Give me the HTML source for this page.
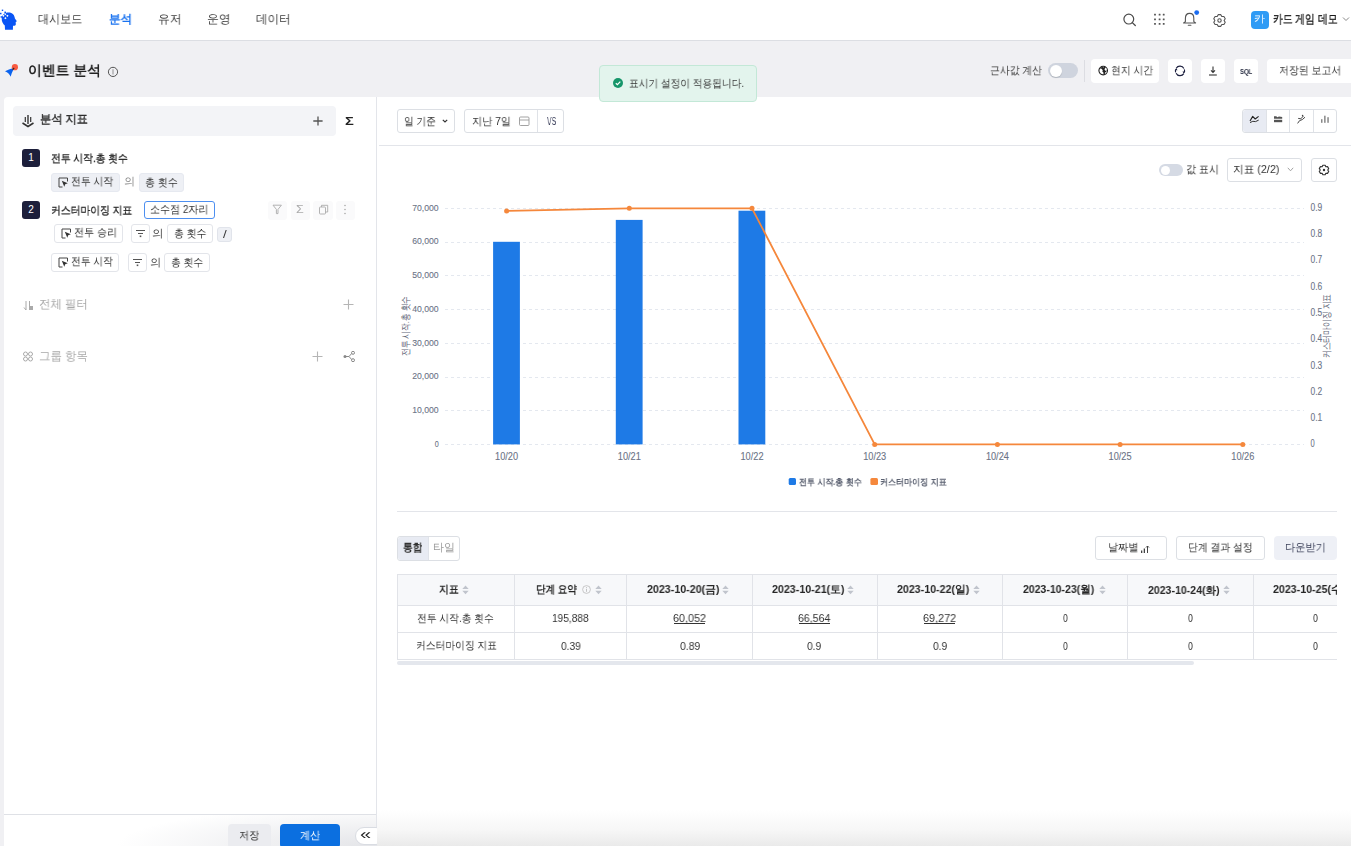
<!DOCTYPE html>
<html><head><meta charset="utf-8"><style>
*{box-sizing:border-box;}
html,body{margin:0;padding:0;}
body{width:1351px;height:846px;overflow:hidden;position:relative;background:#f0f0f3;font-family:"Liberation Sans",sans-serif;color:#333;}
.a{position:absolute;white-space:nowrap;}
.t{position:absolute;white-space:nowrap;line-height:1;transform-origin:0 0;will-change:transform;}
.btnw{position:absolute;background:#fff;border-radius:4px;}
.chip{position:absolute;height:19px;border-radius:3px;}
.chip.f{background:#eef0f5;border:1px solid #e6e9f0;}
.chip.o{background:#fff;border:1px solid #e3e5ea;}
.box{position:absolute;border:1px solid #dcdfe4;border-radius:3px;background:#fff;}
</style></head><body>
<div class="a" style="left:0;top:0;width:1351px;height:41px;background:#fff;border-bottom:1px solid #dcdee3"></div>
<svg class="a" style="left:0;top:5px" width="25" height="30" viewBox="0 0 25 30">
<path d="M5 24.8 L4.8 20.5 C3 19 1.6 16.5 1.7 13.5 C1.8 10 4.5 7.6 8.5 7.6 C12.5 7.6 14.6 10.2 14.9 13.6 L16.9 16.3 L15.7 17 L15.8 19.6 C15.6 20.6 14.8 20.9 13 20.8 L12.9 24.8 Z" fill="#0a55f5"/>
<g fill="#0a55f5"><rect x="1.8" y="4.6" width="1.4" height="1.4"/><rect x="0" y="7.8" width="1.5" height="1.5"/><rect x="4.4" y="6.6" width="1.6" height="1.6"/><rect x="0.6" y="11.2" width="1.5" height="1.5"/></g>
<g fill="#fff"><rect x="2.6" y="10" width="1.6" height="1.6" transform="rotate(45 3.4 10.8)"/><rect x="4.6" y="12.4" width="1.6" height="1.6" transform="rotate(45 5.4 13.2)"/><rect x="6.6" y="10" width="1.6" height="1.6" transform="rotate(45 7.4 10.8)"/><rect x="4.6" y="8.6" width="1.4" height="1.4" transform="rotate(45 5.3 9.3)"/></g>
</svg>
<div class="t" style="left:37.58px;top:13.00px;font-size:12px;font-weight:400;color:#3a3a3a;transform:scaleX(0.9239);">대시보드</div>
<div class="t" style="left:108.64px;top:13.20px;font-size:12px;font-weight:700;color:#1a73f0;transform:scaleX(0.9636);">분석</div>
<div class="t" style="left:157.91px;top:13.20px;font-size:12px;font-weight:400;color:#3a3a3a;transform:scaleX(0.9857);">유저</div>
<div class="t" style="left:206.81px;top:13.20px;font-size:12px;font-weight:400;color:#3a3a3a;transform:scaleX(0.9857);">운영</div>
<div class="t" style="left:255.94px;top:13.20px;font-size:12px;font-weight:400;color:#3a3a3a;transform:scaleX(0.9636);">데이터</div>
<svg class="a" style="left:1122px;top:12px" width="15" height="15" viewBox="0 0 15 15"><circle cx="6.8" cy="7.1" r="4.9" fill="none" stroke="#4a4a4a" stroke-width="1.2"/><path d="M10.3 10.6 L13.3 13.5" stroke="#4a4a4a" stroke-width="1.3" stroke-linecap="round"/></svg>
<svg class="a" style="left:1153px;top:13px" width="13" height="13" viewBox="0 0 13 13"><g fill="#555"><rect x="1.1" y="0.7999999999999999" width="1.8" height="1.8" rx="0.3"/><rect x="5.699999999999999" y="0.7999999999999999" width="1.8" height="1.8" rx="0.3"/><rect x="9.799999999999999" y="0.7999999999999999" width="1.8" height="1.8" rx="0.3"/><rect x="1.1" y="5.5" width="1.8" height="1.8" rx="0.3"/><rect x="5.699999999999999" y="5.5" width="1.8" height="1.8" rx="0.3"/><rect x="9.799999999999999" y="5.5" width="1.8" height="1.8" rx="0.3"/><rect x="1.1" y="9.9" width="1.8" height="1.8" rx="0.3"/><rect x="5.699999999999999" y="9.9" width="1.8" height="1.8" rx="0.3"/><rect x="9.799999999999999" y="9.9" width="1.8" height="1.8" rx="0.3"/></g></svg>
<svg class="a" style="left:1182px;top:10px" width="18" height="17" viewBox="0 0 18 17"><path d="M1.6 13 L3.4 11.6 L3.4 8.2 C3.4 5.2 5.3 3.4 7.6 3.4 C9.9 3.4 11.8 5.2 11.8 8.2 L11.8 11.6 L13.6 13 Z" fill="none" stroke="#555" stroke-width="1.1" stroke-linejoin="round"/><path d="M6.3 15.3 L8.9 15.3" stroke="#555" stroke-width="1.1" stroke-linecap="round"/><circle cx="14.7" cy="2.6" r="2.4" fill="#1a6cf0"/></svg>
<svg class="a" style="left:1212px;top:13px" width="15" height="15" viewBox="0 0 15 15"><path d="M5.20 3.52 L6.19 1.64 L8.81 1.64 L9.80 3.52 L11.92 3.44 L13.23 5.71 L12.10 7.50 L13.23 9.29 L11.92 11.56 L9.80 11.48 L8.81 13.36 L6.19 13.36 L5.20 11.48 L3.08 11.56 L1.77 9.29 L2.90 7.50 L1.77 5.71 L3.08 3.44 Z" fill="none" stroke="#555" stroke-width="1.1" stroke-linejoin="round"/><circle cx="7.5" cy="7.5" r="1.7" fill="none" stroke="#555" stroke-width="1.1"/></svg>
<div class="a" style="left:1251px;top:11px;width:18px;height:18px;background:#2f9bf5;border-radius:4px"></div>
<div class="t" style="left:1253.89px;top:14.00px;font-size:10px;font-weight:400;color:#fff;transform:scaleX(1.1111);">카</div>
<div class="t" style="left:1272.58px;top:12.50px;font-size:12px;font-weight:400;color:#1a1a1a;transform:scaleX(0.8182);-webkit-text-stroke:0.35px #1a1a1a;">카드 게임 데모</div>
<svg class="a" style="left:1342px;top:16px" width="8" height="6" viewBox="0 0 8 6"><path d="M1 1.5 L4 4.5 L7 1.5" fill="none" stroke="#888" stroke-width="1"/></svg>
<svg class="a" style="left:0;top:58px" width="20" height="22" viewBox="0 58 20 22"><path d="M5 71.3 Q9 69.3 12.8 68.3 L13.6 69.3 Q11.6 73 10.6 76.7 Q9.3 73 5 71.3 Z" fill="#0b63ee"/><circle cx="14.9" cy="67.2" r="3.1" fill="#f85a40"/><path d="M12.6 69.6 L14.2 68" stroke="#1a2333" stroke-width="1.1"/></svg>
<div class="t" style="left:28.01px;top:63.00px;font-size:14px;font-weight:700;color:#222;transform:scaleX(0.9859);">이벤트 분석</div>
<svg class="a" style="left:107px;top:66px" width="12" height="12" viewBox="0 0 12 12"><circle cx="6" cy="5.9" r="4.6" fill="none" stroke="#555" stroke-width="1"/><path d="M6 3.3 L6 8.5" stroke="#999" stroke-width="1.1"/></svg>
<div class="t" style="left:990.10px;top:64.50px;font-size:11px;font-weight:400;color:#3c3c3c;transform:scaleX(0.8964);">근사값 계산</div>
<div class="a" style="left:1048px;top:63px;width:30px;height:15px;border-radius:8px;background:#cfd4de"><div class="a" style="left:1.5px;top:1.5px;width:12px;height:12px;border-radius:6px;background:#fff;box-shadow:0 1px 1px rgba(0,0,0,.15)"></div></div>
<div class="a" style="left:1084px;top:60px;width:1px;height:22px;background:#dcdde2"></div>
<div class="btnw" style="left:1091px;top:59px;width:68px;height:24px"></div>
<svg class="a" style="left:1098px;top:65px" width="11" height="11" viewBox="0 0 11 11"><circle cx="5.2" cy="5.6" r="4.3" fill="none" stroke="#222" stroke-width="1.1"/><path d="M2 3.6 L3.6 3.8 L4.8 5.2 L4.3 6.4 L5.4 7.4 L5.5 9.6 L6.8 9.2 L7.1 7.5 L8.2 6.8 L9 5.6 L7.3 5.7 L6.5 4.6 L7 3.3 L7.9 2.6 L6.4 1.6 L5.5 2.5 L4 1.8 Z" fill="#222"/></svg>
<div class="t" style="left:1110.60px;top:64.50px;font-size:11px;font-weight:400;color:#3c3c3c;transform:scaleX(0.8978);">현지 시간</div>
<div class="btnw" style="left:1168px;top:59px;width:24px;height:24px"></div>
<svg class="a" style="left:1174px;top:64px" width="12" height="13" viewBox="1174 64 12 13"><path d="M1176.2 68.2 A4.4 4.4 0 0 1 1183.9 68.6 M1183.8 73.6 A4.4 4.4 0 0 1 1176.1 73.2" fill="none" stroke="#1c1f3e" stroke-width="1.15"/><path d="M1175 70.2 L1177.5 70.2 L1176.2 68 Z M1185 71.6 L1182.5 71.6 L1183.8 73.8 Z" fill="#1c1f3e"/><path d="M1175.6 69.5 A4.4 4.4 0 0 0 1175.7 72.4 M1184.4 72.3 A4.4 4.4 0 0 0 1184.3 69.4" fill="none" stroke="#1c1f3e" stroke-width="1.15"/></svg>
<div class="btnw" style="left:1201px;top:59px;width:24px;height:24px"></div>
<svg class="a" style="left:1207px;top:64px" width="12" height="13" viewBox="0 0 12 13"><path d="M6 2.6 L6 8.2 M4 6.4 L6 8.4 L8 6.4" fill="none" stroke="#333" stroke-width="1.1"/><path d="M2 11 L9.8 11" stroke="#444" stroke-width="1.2"/></svg>
<div class="btnw" style="left:1234px;top:59px;width:24px;height:24px"></div>
<div class="t" style="left:1240.00px;top:67.70px;font-size:7px;font-weight:700;color:#262b40;transform:scaleX(0.8571);">SQL</div>
<div class="btnw" style="left:1267px;top:59px;width:90px;height:24px"></div>
<div class="t" style="left:1279.10px;top:65.00px;font-size:11px;font-weight:400;color:#3c3c3c;transform:scaleX(0.9030);">저장된 보고서</div>
<div class="a" style="left:4px;top:97px;width:373px;height:749px;background:#fff;border-right:1px solid #e3e5ea;border-top-left-radius:4px"></div>
<div class="a" style="left:13px;top:106px;width:323px;height:30px;background:#f3f4f7;border-radius:4px"></div>
<svg class="a" style="left:21px;top:114px" width="14" height="14" viewBox="0 0 14 14"><path d="M7 1 L7 10" stroke="#333" stroke-width="1.4"/><path d="M4.3 3 L4.3 8 M9.7 3 L9.7 8" stroke="#333" stroke-width="1.2"/><path d="M1.5 9 L7 12.5 L12.5 9" fill="none" stroke="#333" stroke-width="1.5"/></svg>
<div class="t" style="left:39.56px;top:113.00px;font-size:12px;font-weight:400;color:#1f1f1f;transform:scaleX(0.9388);-webkit-text-stroke:0.35px #1f1f1f;">분석 지표</div>
<svg class="a" style="left:312px;top:115px" width="12" height="12" viewBox="0 0 12 12"><path d="M6 1.4 L6 10.5 M1.3 6 L10.6 6" stroke="#555" stroke-width="1.3"/></svg>
<div class="t" style="left:345.00px;top:116.00px;font-size:11px;font-weight:700;color:#222;transform:scaleX(1.3333);">&#931;</div>
<div class="a" style="left:22px;top:149px;width:18px;height:18px;background:#1d1f3b;border-radius:3px"></div>
<div class="a" style="left:22px;top:149px;width:18px;height:18px;line-height:18px;text-align:center;font-size:10px;font-weight:normal;color:#fff">1</div>
<div class="t" style="left:51.31px;top:152.90px;font-size:11px;font-weight:400;color:#1f1f1f;transform:scaleX(0.8929);-webkit-text-stroke:0.3px #1f1f1f;">전투 시작.총 횟수</div>
<div class="chip f" style="left:51px;top:173px;width:69px"></div>
<svg class="a" style="left:58px;top:177px" width="11" height="11" viewBox="0 0 11 11"><path d="M9.5 4.5 L9.5 1 L1 1 L1 10 L4.5 10" fill="none" stroke="#444" stroke-width="1"/><path d="M3.8 3.8 L9.8 6.3 L7.2 7.2 L6.3 9.8 Z" fill="#333"/></svg>
<div class="t" style="left:71.00px;top:175.80px;font-size:11px;font-weight:400;color:#333;transform:scaleX(0.8978);">전투 시작</div>
<div class="t" style="left:124.19px;top:176.40px;font-size:11px;font-weight:400;color:#888;transform:scaleX(1.0125);">의</div>
<div class="chip f" style="left:139px;top:173px;width:45px"></div>
<div class="t" style="left:145.09px;top:177.00px;font-size:11px;font-weight:400;color:#333;transform:scaleX(0.9118);">총 횟수</div>
<div class="a" style="left:22px;top:201px;width:18px;height:18px;background:#1d1f3b;border-radius:3px"></div>
<div class="a" style="left:22px;top:201px;width:18px;height:18px;line-height:18px;text-align:center;font-size:10px;font-weight:normal;color:#fff">2</div>
<div class="t" style="left:51.21px;top:204.90px;font-size:11px;font-weight:400;color:#1f1f1f;transform:scaleX(0.8921);-webkit-text-stroke:0.3px #1f1f1f;">커스터마이징 지표</div>
<div class="a" style="left:144px;top:201px;width:71px;height:18px;border:1px solid #4d8ff0;border-radius:3px;background:#fff"></div>
<div class="t" style="left:150.29px;top:204.30px;font-size:11px;font-weight:400;color:#333;transform:scaleX(0.9131);">소수점 2자리</div>
<div class="a" style="left:268px;top:201px;width:19px;height:19px;background:#fafafb;border-radius:3px"></div>
<div class="a" style="left:291px;top:201px;width:19px;height:19px;background:#fafafb;border-radius:3px"></div>
<div class="a" style="left:313px;top:201px;width:20px;height:19px;background:#fafafb;border-radius:3px"></div>
<div class="a" style="left:336px;top:201px;width:19px;height:19px;background:#fafafb;border-radius:3px"></div>
<svg class="a" style="left:272px;top:203.5px" width="11" height="11" viewBox="0 0 11 11"><path d="M1 1.2 L9.4 1.2 L6 5.4 L6 9.6 L4.4 9.6 L4.4 5.4 Z" fill="none" stroke="#aaa" stroke-width="0.9"/></svg>
<div class="t" style="left:296.30px;top:205.00px;font-size:10px;font-weight:400;color:#aaa;transform:scaleX(1.2500);">&#931;</div>
<svg class="a" style="left:317.5px;top:203.5px" width="11" height="11" viewBox="0 0 11 11"><rect x="1.5" y="3" width="6" height="7" rx="0.8" fill="none" stroke="#aaa" stroke-width="0.9"/><path d="M3.5 3 L3.5 1.3 L9.7 1.3 L9.7 8 L7.5 8" fill="none" stroke="#aaa" stroke-width="0.9"/></svg>
<svg class="a" style="left:343px;top:203.5px" width="4" height="11" viewBox="0 0 4 11"><circle cx="2" cy="1.5" r="0.8" fill="#aaa"/><circle cx="2" cy="5.5" r="0.8" fill="#aaa"/><circle cx="2" cy="9.5" r="0.8" fill="#aaa"/></svg>
<div class="chip o" style="left:54px;top:224px;width:69px"></div>
<svg class="a" style="left:61px;top:228px" width="11" height="11" viewBox="0 0 11 11"><path d="M9.5 4.5 L9.5 1 L1 1 L1 10 L4.5 10" fill="none" stroke="#444" stroke-width="1"/><path d="M3.8 3.8 L9.8 6.3 L7.2 7.2 L6.3 9.8 Z" fill="#333"/></svg>
<div class="t" style="left:74.08px;top:227.30px;font-size:11px;font-weight:400;color:#333;transform:scaleX(0.9182);">전투 승리</div>
<div class="chip o" style="left:131px;top:224px;width:19px"></div>
<svg class="a" style="left:135px;top:229px" width="11" height="9" viewBox="0 0 11 9"><path d="M1 1.5 L10 1.5 M3 4.5 L8 4.5" stroke="#555" stroke-width="1"/><rect x="4.7" y="6.5" width="1.6" height="1.6" fill="#555"/></svg>
<div class="t" style="left:152.45px;top:227.50px;font-size:11px;font-weight:400;color:#444;transform:scaleX(1.0500);">의</div>
<div class="chip o" style="left:167px;top:224px;width:46px"></div>
<div class="t" style="left:173.70px;top:227.70px;font-size:11px;font-weight:400;color:#333;transform:scaleX(0.9000);">총 횟수</div>
<div class="a" style="left:217px;top:227px;width:15px;height:15px;background:#eef0f5;border:1px solid #e1e4eb;border-radius:3px"></div>
<div class="t" style="left:222.50px;top:230.00px;font-size:10px;font-weight:400;color:#333;transform:scaleX(1.3333);">/</div>
<div class="chip o" style="left:51px;top:253px;width:68px"></div>
<svg class="a" style="left:58px;top:257px" width="11" height="11" viewBox="0 0 11 11"><path d="M9.5 4.5 L9.5 1 L1 1 L1 10 L4.5 10" fill="none" stroke="#444" stroke-width="1"/><path d="M3.8 3.8 L9.8 6.3 L7.2 7.2 L6.3 9.8 Z" fill="#333"/></svg>
<div class="t" style="left:71.31px;top:256.40px;font-size:11px;font-weight:400;color:#333;transform:scaleX(0.8911);">전투 시작</div>
<div class="chip o" style="left:128px;top:253px;width:19px"></div>
<svg class="a" style="left:132px;top:258px" width="11" height="9" viewBox="0 0 11 9"><path d="M1 1.5 L10 1.5 M3 4.5 L8 4.5" stroke="#555" stroke-width="1"/><rect x="4.7" y="6.5" width="1.6" height="1.6" fill="#555"/></svg>
<div class="t" style="left:149.57px;top:256.60px;font-size:11px;font-weight:400;color:#444;transform:scaleX(1.0250);">의</div>
<div class="chip o" style="left:164px;top:253px;width:46px"></div>
<div class="t" style="left:170.91px;top:257.40px;font-size:11px;font-weight:400;color:#333;transform:scaleX(0.8941);">총 횟수</div>
<svg class="a" style="left:23px;top:300px" width="11" height="11" viewBox="0 0 11 11"><path d="M3 1 L3 10 M1 7.5 L3 10" fill="none" stroke="#aaa" stroke-width="1"/><path d="M6.5 1 L6.5 10" stroke="#aaa" stroke-width="1"/><rect x="6.5" y="6" width="3.5" height="4" fill="#aaa"/></svg>
<div class="t" style="left:39.04px;top:298.00px;font-size:12px;font-weight:400;color:#a8a8a8;transform:scaleX(0.9583);">전체 필터</div>
<svg class="a" style="left:343px;top:299px" width="11" height="11" viewBox="0 0 11 11"><path d="M5.5 0.5 L5.5 10.5 M0.5 5.5 L10.5 5.5" stroke="#b5b5b5" stroke-width="1.1"/></svg>
<svg class="a" style="left:22px;top:351px" width="12" height="11" viewBox="0 0 12 11"><circle cx="3.5" cy="3" r="2" fill="none" stroke="#aaa" stroke-width="1"/><circle cx="8.5" cy="3" r="2" fill="none" stroke="#aaa" stroke-width="1"/><circle cx="3.5" cy="8" r="2" fill="none" stroke="#aaa" stroke-width="1"/><circle cx="8.5" cy="8" r="2" fill="none" stroke="#aaa" stroke-width="1"/></svg>
<div class="t" style="left:39.04px;top:350.00px;font-size:12px;font-weight:400;color:#a8a8a8;transform:scaleX(0.9592);">그룹 항목</div>
<svg class="a" style="left:312px;top:351px" width="11" height="11" viewBox="0 0 11 11"><path d="M5.5 0.5 L5.5 10.5 M0.5 5.5 L10.5 5.5" stroke="#b5b5b5" stroke-width="1.1"/></svg>
<svg class="a" style="left:343px;top:351px" width="12" height="11" viewBox="0 0 12 11"><circle cx="2" cy="5.5" r="1.5" fill="#888"/><circle cx="10" cy="1.8" r="1.5" fill="none" stroke="#888" stroke-width="1"/><circle cx="10" cy="9.2" r="1.5" fill="none" stroke="#888" stroke-width="1"/><path d="M2 5.5 L6 5.5 L8.7 2.5 M6 5.5 L8.7 8.5" fill="none" stroke="#888" stroke-width="1"/></svg>
<div class="a" style="left:4px;top:814px;width:372px;height:1px;background:#dfe1e6"></div>
<div class="a" style="left:4px;top:815px;width:372px;height:31px;background:radial-gradient(ellipse 260px 40px at 100% 100%, rgba(225,226,230,0.9) 0%, rgba(255,255,255,0) 100%)"></div>
<div class="a" style="left:228px;top:824px;width:43px;height:24px;background:#ebecf0;border-radius:4px"></div>
<div class="t" style="left:238.57px;top:830.00px;font-size:11px;font-weight:400;color:#333;transform:scaleX(0.9250);">저장</div>
<div class="a" style="left:280px;top:824px;width:60px;height:24px;background:#0b6fe0;border-radius:4px"></div>
<div class="t" style="left:299.57px;top:830.00px;font-size:11px;font-weight:400;color:#fff;transform:scaleX(0.9250);">계산</div>
<div class="a" style="left:355px;top:827px;width:30px;height:18px;background:#fff;border:1px solid #d9dce2;border-radius:9px"></div>
<div class="t" style="left:360.08px;top:827.00px;font-size:14px;font-weight:400;color:#222;transform:scaleX(1.4167);">&#171;</div>
<div class="a" style="left:377px;top:97px;width:974px;height:749px;background:#fff"></div>
<div class="a" style="left:377px;top:810px;width:974px;height:36px;background:linear-gradient(180deg,rgba(234,234,234,0) 0%,rgba(234,234,234,0.4) 55%,rgba(234,234,234,1) 100%)"></div>
<div class="box" style="left:397px;top:109px;width:58px;height:24px"></div>
<div class="t" style="left:403.81px;top:115.70px;font-size:11px;font-weight:400;color:#333;transform:scaleX(0.8882);">일 기준</div>
<svg class="a" style="left:442px;top:119px" width="6" height="4" viewBox="0 0 6 4"><path d="M0.8 0.8 L3 3 L5.2 0.8" fill="none" stroke="#333" stroke-width="1.2"/></svg>
<div class="box" style="left:464px;top:109px;width:100px;height:24px"></div>
<div class="a" style="left:537px;top:110px;width:1px;height:22px;background:#dfe2e7"></div>
<div class="t" style="left:471.57px;top:115.70px;font-size:11px;font-weight:400;color:#333;transform:scaleX(0.9282);">지난 7일</div>
<svg class="a" style="left:519px;top:116px" width="11" height="10" viewBox="0 0 11 10"><rect x="0.5" y="1" width="9.5" height="8.5" rx="1" fill="none" stroke="#999" stroke-width="0.9"/><path d="M0.5 4 L10 4" stroke="#999" stroke-width="0.9"/></svg>
<div class="t" style="left:546.60px;top:117.30px;font-size:10px;font-weight:400;color:#2a2f4d;transform:scaleX(0.6923);">VS</div>
<div class="box" style="left:1242px;top:109px;width:95px;height:24px"></div>
<div class="a" style="left:1243px;top:110px;width:24px;height:22px;background:#e8ebf3;border-radius:3px 0 0 3px"></div>
<div class="a" style="left:1266px;top:110px;width:1px;height:22px;background:#dfe2e7"></div>
<div class="a" style="left:1289px;top:110px;width:1px;height:22px;background:#dfe2e7"></div>
<div class="a" style="left:1313px;top:110px;width:1px;height:22px;background:#dfe2e7"></div>
<svg class="a" style="left:1249px;top:115px" width="11" height="9" viewBox="1249 115 11 9"><path d="M1250 121 L1252.7 116.4 L1255.2 119 L1258.6 116.4" fill="none" stroke="#222" stroke-width="1.1" stroke-linejoin="round"/><path d="M1250 122.6 L1252.8 121.3 L1255.5 121.6 L1258.7 120.1" fill="none" stroke="#333" stroke-width="1" stroke-linejoin="round"/></svg>
<svg class="a" style="left:1273px;top:115px" width="11" height="9" viewBox="1273 115 11 9"><path d="M1274 116.3 L1276.3 116.3 L1277.3 117.2 L1279 116.6 L1282.2 117 L1282.2 118.8 L1274 118.8 Z" fill="#555"/><path d="M1274 119.8 L1282.2 119.8 L1282.2 122.2 L1274 122.2 Z" fill="#555"/></svg>
<svg class="a" style="left:1296px;top:114px" width="11" height="11" viewBox="1296 114 11 11"><path d="M1297.6 123.4 L1299.6 120.6 L1302.3 119.6 L1305 117.2" fill="none" stroke="#444" stroke-width="1" stroke-linejoin="round"/><path d="M1298.2 118.4 L1300.8 118.8 L1303.4 116" fill="none" stroke="#444" stroke-width="1"/><circle cx="1302.6" cy="115.6" r="0.8" fill="#444"/></svg>
<svg class="a" style="left:1320px;top:115px" width="10" height="9" viewBox="1320 115 10 9"><rect x="1321" y="119.2" width="1.5" height="3.6" fill="#888"/><rect x="1324.1" y="115.7" width="1.5" height="7.1" fill="#888"/><rect x="1327.3" y="117.2" width="1.5" height="5.6" fill="#888"/></svg>
<div class="a" style="left:379px;top:145px;width:972px;height:1px;background:#e3e5ea"></div>
<div class="a" style="left:1159px;top:164px;width:24px;height:12px;border-radius:6px;background:#d5dae4"><div class="a" style="left:1.5px;top:1.5px;width:9px;height:9px;border-radius:5px;background:#fff"></div></div>
<div class="t" style="left:1186.08px;top:163.80px;font-size:11px;font-weight:400;color:#333;transform:scaleX(0.9182);">값 표시</div>
<div class="box" style="left:1227px;top:158px;width:75px;height:24px"></div>
<div class="t" style="left:1233.43px;top:164.20px;font-size:11px;font-weight:400;color:#333;transform:scaleX(0.9717);">지표 (2/2)</div>
<svg class="a" style="left:1287px;top:167px" width="7" height="5" viewBox="0 0 7 5"><path d="M0.8 0.8 L3.5 3.8 L6.2 0.8" fill="none" stroke="#999" stroke-width="0.9"/></svg>
<div class="box" style="left:1311px;top:158px;width:26px;height:24px"></div>
<svg class="a" style="left:1318px;top:164px" width="12" height="12" viewBox="0 0 12 12"><path d="M4.15 2.80 L4.84 1.24 L7.16 1.24 L7.85 2.80 L9.54 2.61 L10.70 4.63 L9.70 6.00 L10.70 7.37 L9.54 9.39 L7.85 9.20 L7.16 10.76 L4.84 10.76 L4.15 9.20 L2.46 9.39 L1.30 7.37 L2.30 6.00 L1.30 4.63 L2.46 2.61 Z" fill="none" stroke="#333" stroke-width="1.1" stroke-linejoin="round"/><circle cx="6" cy="6" r="1.2" fill="#333"/></svg>
<svg class="a" style="left:377px;top:190px" width="974" height="310" viewBox="377 190 974 310">
<g stroke="#e4e8ef" stroke-width="1" stroke-dasharray="3 3"><line x1="445" y1="208.5" x2="1304" y2="208.5"/><line x1="445" y1="242.5" x2="1304" y2="242.5"/><line x1="445" y1="275.5" x2="1304" y2="275.5"/><line x1="445" y1="309.5" x2="1304" y2="309.5"/><line x1="445" y1="343.5" x2="1304" y2="343.5"/><line x1="445" y1="377.5" x2="1304" y2="377.5"/><line x1="445" y1="410.5" x2="1304" y2="410.5"/><line x1="445" y1="444.5" x2="1304" y2="444.5"/></g>
<g fill="#1e7ae6"><rect x="493.1" y="241.8" width="26.8" height="202.6"/><rect x="615.8" y="219.9" width="26.8" height="224.5"/><rect x="738.5" y="210.7" width="26.8" height="233.7"/></g>
<g font-family="Liberation Sans, sans-serif" font-size="10" fill="#6b7386" stroke="#6b7386" stroke-width="0.1"><text x="412.2" y="210.6" font-size="9.3" textLength="26.5" lengthAdjust="spacingAndGlyphs">70,000</text><text x="412.2" y="244.3" font-size="9.3" textLength="26.5" lengthAdjust="spacingAndGlyphs">60,000</text><text x="412.2" y="278.1" font-size="9.3" textLength="26.5" lengthAdjust="spacingAndGlyphs">50,000</text><text x="412.2" y="311.8" font-size="9.3" textLength="26.5" lengthAdjust="spacingAndGlyphs">40,000</text><text x="412.2" y="345.6" font-size="9.3" textLength="26.5" lengthAdjust="spacingAndGlyphs">30,000</text><text x="412.2" y="379.3" font-size="9.3" textLength="26.5" lengthAdjust="spacingAndGlyphs">20,000</text><text x="412.2" y="413.0" font-size="9.3" textLength="26.5" lengthAdjust="spacingAndGlyphs">10,000</text><text x="434.7" y="446.7" font-size="9.3" textLength="4" lengthAdjust="spacingAndGlyphs">0</text><text x="1310.5" y="210.7" textLength="11.7" lengthAdjust="spacingAndGlyphs">0.9</text><text x="1310.5" y="237.0" textLength="11.7" lengthAdjust="spacingAndGlyphs">0.8</text><text x="1310.5" y="263.3" textLength="11.7" lengthAdjust="spacingAndGlyphs">0.7</text><text x="1310.5" y="289.6" textLength="11.7" lengthAdjust="spacingAndGlyphs">0.6</text><text x="1310.5" y="315.9" textLength="11.7" lengthAdjust="spacingAndGlyphs">0.5</text><text x="1310.5" y="342.2" textLength="11.7" lengthAdjust="spacingAndGlyphs">0.4</text><text x="1310.5" y="368.5" textLength="11.7" lengthAdjust="spacingAndGlyphs">0.3</text><text x="1310.5" y="394.8" textLength="11.7" lengthAdjust="spacingAndGlyphs">0.2</text><text x="1310.5" y="421.1" textLength="11.7" lengthAdjust="spacingAndGlyphs">0.1</text><text x="1310.5" y="447.4" textLength="4.2" lengthAdjust="spacingAndGlyphs">0</text><text x="495.1" y="460.3" textLength="23" lengthAdjust="spacingAndGlyphs">10/20</text><text x="617.8" y="460.3" textLength="23" lengthAdjust="spacingAndGlyphs">10/21</text><text x="740.5" y="460.3" textLength="23" lengthAdjust="spacingAndGlyphs">10/22</text><text x="863.2" y="460.3" textLength="23" lengthAdjust="spacingAndGlyphs">10/23</text><text x="985.9" y="460.3" textLength="23" lengthAdjust="spacingAndGlyphs">10/24</text><text x="1108.6" y="460.3" textLength="23" lengthAdjust="spacingAndGlyphs">10/25</text><text x="1231.3" y="460.3" textLength="23" lengthAdjust="spacingAndGlyphs">10/26</text></g>
<polyline points="506.6,210.9 629.3,208.3 752.0,208.3 874.7,444.4 997.4,444.4 1120.1,444.4 1242.8,444.4" fill="none" stroke="#f5873b" stroke-width="1.8" stroke-linejoin="round"/>
<g fill="#f5883c"><circle cx="506.6" cy="210.9" r="2.5"/><circle cx="629.3" cy="208.3" r="2.5"/><circle cx="752.0" cy="208.3" r="2.5"/><circle cx="874.7" cy="444.4" r="2.5"/><circle cx="997.4" cy="444.4" r="2.5"/><circle cx="1120.1" cy="444.4" r="2.5"/><circle cx="1242.8" cy="444.4" r="2.5"/></g>
<rect x="788.7" y="478" width="7.3" height="7" rx="1.5" fill="#1e7ae6"/>
<rect x="870.4" y="478" width="7.6" height="7" rx="1.5" fill="#f5883c"/>
</svg>
<svg class="a" style="left:377px;top:190px" width="974" height="310" viewBox="377 190 974 310"><g font-family="Liberation Sans, sans-serif" font-size="9.5" fill="#5f6678"><text transform="translate(409.3 326) rotate(-90)" x="-30" y="0" textLength="60" lengthAdjust="spacingAndGlyphs">전투 시작.총 횟수</text><text transform="translate(1330.3 326) rotate(-90)" x="-32" y="0" textLength="64" lengthAdjust="spacingAndGlyphs">커스터마이징 지표</text></g></svg>
<div class="t" style="left:799.12px;top:478.00px;font-size:9px;font-weight:700;color:#5a6070;transform:scaleX(0.8841);">전투 시작.총 횟수</div>
<div class="t" style="left:880.11px;top:478.00px;font-size:9px;font-weight:700;color:#5a6070;transform:scaleX(0.8904);">커스터마이징 지표</div>
<div class="a" style="left:397px;top:511px;width:940px;height:1px;background:#e3e5ea"></div>
<div class="box" style="left:397px;top:536px;width:63px;height:25px"></div>
<div class="a" style="left:398px;top:537px;width:31px;height:23px;background:#e8ebf3;border-radius:3px 0 0 3px;border-right:1px solid #e0e3e9"></div>
<div class="t" style="left:402.62px;top:541.50px;font-size:11px;font-weight:700;color:#333;transform:scaleX(0.8810);">통합</div>
<div class="t" style="left:433.00px;top:541.50px;font-size:11px;font-weight:400;color:#999;">타일</div>
<div class="box" style="left:1095px;top:536px;width:72px;height:24px"></div>
<div class="t" style="left:1107.58px;top:542.20px;font-size:11px;font-weight:400;color:#333;transform:scaleX(0.9233);">날짜별</div>
<svg class="a" style="left:1141px;top:545px" width="9" height="8" viewBox="0 0 9 8"><rect x="0" y="5.5" width="1.3" height="2.5" fill="#444"/><rect x="2.7" y="3.5" width="1.3" height="4.5" fill="#444"/><path d="M6.5 8 L6.5 1 M5 2.5 L6.5 1 L8 2.5" fill="none" stroke="#444" stroke-width="1"/></svg>
<div class="box" style="left:1176px;top:536px;width:89px;height:24px"></div>
<div class="t" style="left:1188.10px;top:542.20px;font-size:11px;font-weight:400;color:#333;transform:scaleX(0.8986);">단계 결과 설정</div>
<div class="a" style="left:1274px;top:536px;width:63px;height:24px;background:#eef0f6;border-radius:4px"></div>
<div class="t" style="left:1285.27px;top:542.20px;font-size:11px;font-weight:400;color:#3a3f58;transform:scaleX(0.9293);">다운받기</div>
<div class="a" style="left:397px;top:574px;width:940px;height:86px;overflow:hidden"><div class="a" style="left:0;top:0;width:982px;height:31px;background:#f7f8fa"></div><div class="a" style="left:0;top:0px;width:982px;height:1px;background:#e1e3e8"></div><div class="a" style="left:0;top:31px;width:982px;height:1px;background:#e1e3e8"></div><div class="a" style="left:0;top:58px;width:982px;height:1px;background:#e1e3e8"></div><div class="a" style="left:0;top:85px;width:982px;height:1px;background:#e1e3e8"></div><div class="a" style="left:0px;top:0;width:1px;height:86px;background:#e1e3e8"></div><div class="a" style="left:117px;top:0;width:1px;height:86px;background:#e1e3e8"></div><div class="a" style="left:229px;top:0;width:1px;height:86px;background:#e1e3e8"></div><div class="a" style="left:355px;top:0;width:1px;height:86px;background:#e1e3e8"></div><div class="a" style="left:480px;top:0;width:1px;height:86px;background:#e1e3e8"></div><div class="a" style="left:605px;top:0;width:1px;height:86px;background:#e1e3e8"></div><div class="a" style="left:730px;top:0;width:1px;height:86px;background:#e1e3e8"></div><div class="a" style="left:856px;top:0;width:1px;height:86px;background:#e1e3e8"></div></div>
<div class="t" style="left:438.90px;top:583.90px;font-size:11px;font-weight:700;color:#262626;transform:scaleX(0.9000);">지표</div>
<svg class="a" style="left:462.1px;top:584.5px" width="7" height="10" viewBox="0 0 7 10"><path d="M0.3 4 L3.5 0.5 L6.7 4 Z M0.3 5.8 L3.5 9.3 L6.7 5.8 Z" fill="#c0c4cc"/></svg>
<div class="t" style="left:536.03px;top:583.90px;font-size:11px;font-weight:700;color:#262626;transform:scaleX(0.8696);">단계 요약</div>
<svg class="a" style="left:595.2px;top:584.5px" width="7" height="10" viewBox="0 0 7 10"><path d="M0.3 4 L3.5 0.5 L6.7 4 Z M0.3 5.8 L3.5 9.3 L6.7 5.8 Z" fill="#c0c4cc"/></svg>
<div class="t" style="left:646.60px;top:583.90px;font-size:11px;font-weight:700;color:#262626;transform:scaleX(0.9703);">2023-10-20(금)</div>
<svg class="a" style="left:722.3px;top:584.5px" width="7" height="10" viewBox="0 0 7 10"><path d="M0.3 4 L3.5 0.5 L6.7 4 Z M0.3 5.8 L3.5 9.3 L6.7 5.8 Z" fill="#c0c4cc"/></svg>
<div class="t" style="left:771.70px;top:583.90px;font-size:11px;font-weight:700;color:#262626;transform:scaleX(0.9703);">2023-10-21(토)</div>
<svg class="a" style="left:847.4px;top:584.5px" width="7" height="10" viewBox="0 0 7 10"><path d="M0.3 4 L3.5 0.5 L6.7 4 Z M0.3 5.8 L3.5 9.3 L6.7 5.8 Z" fill="#c0c4cc"/></svg>
<div class="t" style="left:897.40px;top:583.90px;font-size:11px;font-weight:700;color:#262626;transform:scaleX(0.9676);">2023-10-22(일)</div>
<svg class="a" style="left:972.9px;top:584.5px" width="7" height="10" viewBox="0 0 7 10"><path d="M0.3 4 L3.5 0.5 L6.7 4 Z M0.3 5.8 L3.5 9.3 L6.7 5.8 Z" fill="#c0c4cc"/></svg>
<div class="t" style="left:1022.90px;top:583.90px;font-size:11px;font-weight:700;color:#262626;transform:scaleX(0.9541);">2023-10-23(월)</div>
<svg class="a" style="left:1098.5px;top:584.5px" width="7" height="10" viewBox="0 0 7 10"><path d="M0.3 4 L3.5 0.5 L6.7 4 Z M0.3 5.8 L3.5 9.3 L6.7 5.8 Z" fill="#c0c4cc"/></svg>
<div class="t" style="left:1148.00px;top:584.90px;font-size:11px;font-weight:700;color:#262626;transform:scaleX(0.9595);">2023-10-24(화)</div>
<svg class="a" style="left:1223.4px;top:584.5px" width="7" height="10" viewBox="0 0 7 10"><path d="M0.3 4 L3.5 0.5 L6.7 4 Z M0.3 5.8 L3.5 9.3 L6.7 5.8 Z" fill="#c0c4cc"/></svg>
<div class="t" style="left:1273.20px;top:583.90px;font-size:11px;font-weight:700;color:#262626;transform:scaleX(0.9676);">2023-10-25(수)</div>
<svg class="a" style="left:582px;top:585px" width="9" height="9" viewBox="0 0 9 9"><circle cx="4.5" cy="4.5" r="3.9" fill="none" stroke="#bbb" stroke-width="0.8"/><path d="M4.5 3.8 L4.5 6.8" stroke="#bbb" stroke-width="0.9"/><circle cx="4.5" cy="2.5" r="0.5" fill="#bbb"/></svg>
<div class="t" style="left:417.31px;top:612.70px;font-size:11px;font-weight:400;color:#333;transform:scaleX(0.8929);">전투 시작.총 횟수</div>
<div class="t" style="left:551.68px;top:613.20px;font-size:11px;font-weight:400;color:#333;transform:scaleX(0.9205);">195,888</div>
<div class="t" style="left:672.52px;top:613.20px;font-size:11px;font-weight:400;color:#333;transform:scaleX(0.9812);">60,052</div>
<div class="a" style="left:673.5px;top:622.5px;width:31.4px;height:1px;background:#333"></div>
<div class="t" style="left:797.54px;top:613.20px;font-size:11px;font-weight:400;color:#333;transform:scaleX(0.9606);">66,564</div>
<div class="a" style="left:798.5px;top:622.5px;width:31.7px;height:1px;background:#333"></div>
<div class="t" style="left:922.82px;top:613.20px;font-size:11px;font-weight:400;color:#333;transform:scaleX(0.9844);">69,272</div>
<div class="a" style="left:923.8px;top:622.5px;width:31.5px;height:1px;background:#333"></div>
<div class="t" style="left:1062.90px;top:613.20px;font-size:11px;font-weight:400;color:#333;transform:scaleX(0.7667);">0</div>
<div class="t" style="left:1188.00px;top:613.20px;font-size:11px;font-weight:400;color:#333;transform:scaleX(0.7833);">0</div>
<div class="t" style="left:1313.20px;top:613.20px;font-size:11px;font-weight:400;color:#333;transform:scaleX(0.8000);">0</div>
<div class="t" style="left:415.51px;top:639.60px;font-size:11px;font-weight:400;color:#333;transform:scaleX(0.8899);">커스터마이징 지표</div>
<div class="t" style="left:560.70px;top:640.50px;font-size:11px;font-weight:400;color:#333;transform:scaleX(0.9238);">0.39</div>
<div class="t" style="left:679.50px;top:640.50px;font-size:11px;font-weight:400;color:#333;transform:scaleX(0.9476);">0.89</div>
<div class="t" style="left:807.30px;top:640.50px;font-size:11px;font-weight:400;color:#333;transform:scaleX(0.9267);">0.9</div>
<div class="t" style="left:932.60px;top:640.50px;font-size:11px;font-weight:400;color:#333;transform:scaleX(0.9267);">0.9</div>
<div class="t" style="left:1062.90px;top:640.50px;font-size:11px;font-weight:400;color:#333;transform:scaleX(0.7667);">0</div>
<div class="t" style="left:1188.00px;top:640.50px;font-size:11px;font-weight:400;color:#333;transform:scaleX(0.7833);">0</div>
<div class="t" style="left:1313.20px;top:640.50px;font-size:11px;font-weight:400;color:#333;transform:scaleX(0.8000);">0</div>
<div class="a" style="left:1337px;top:570px;width:14px;height:95px;background:#fff"></div>
<div class="a" style="left:397px;top:660.5px;width:797px;height:4.5px;background:#e4e7ed;border-radius:3px"></div>
<div class="a" style="left:599px;top:65px;width:158px;height:37px;background:#e3f4ed;border:1px solid #c3e8d7;border-radius:4px"></div>
<svg class="a" style="left:613px;top:78px" width="10" height="10" viewBox="0 0 10 10"><circle cx="5" cy="5" r="5" fill="#16966a"/><path d="M2.8 5.2 L4.4 6.7 L7.3 3.6" fill="none" stroke="#fff" stroke-width="1.2"/></svg>
<div class="t" style="left:629.41px;top:78.00px;font-size:11px;font-weight:400;color:#3a3a3a;transform:scaleX(0.8852);">표시기 설정이 적용됩니다.</div>
</body></html>
